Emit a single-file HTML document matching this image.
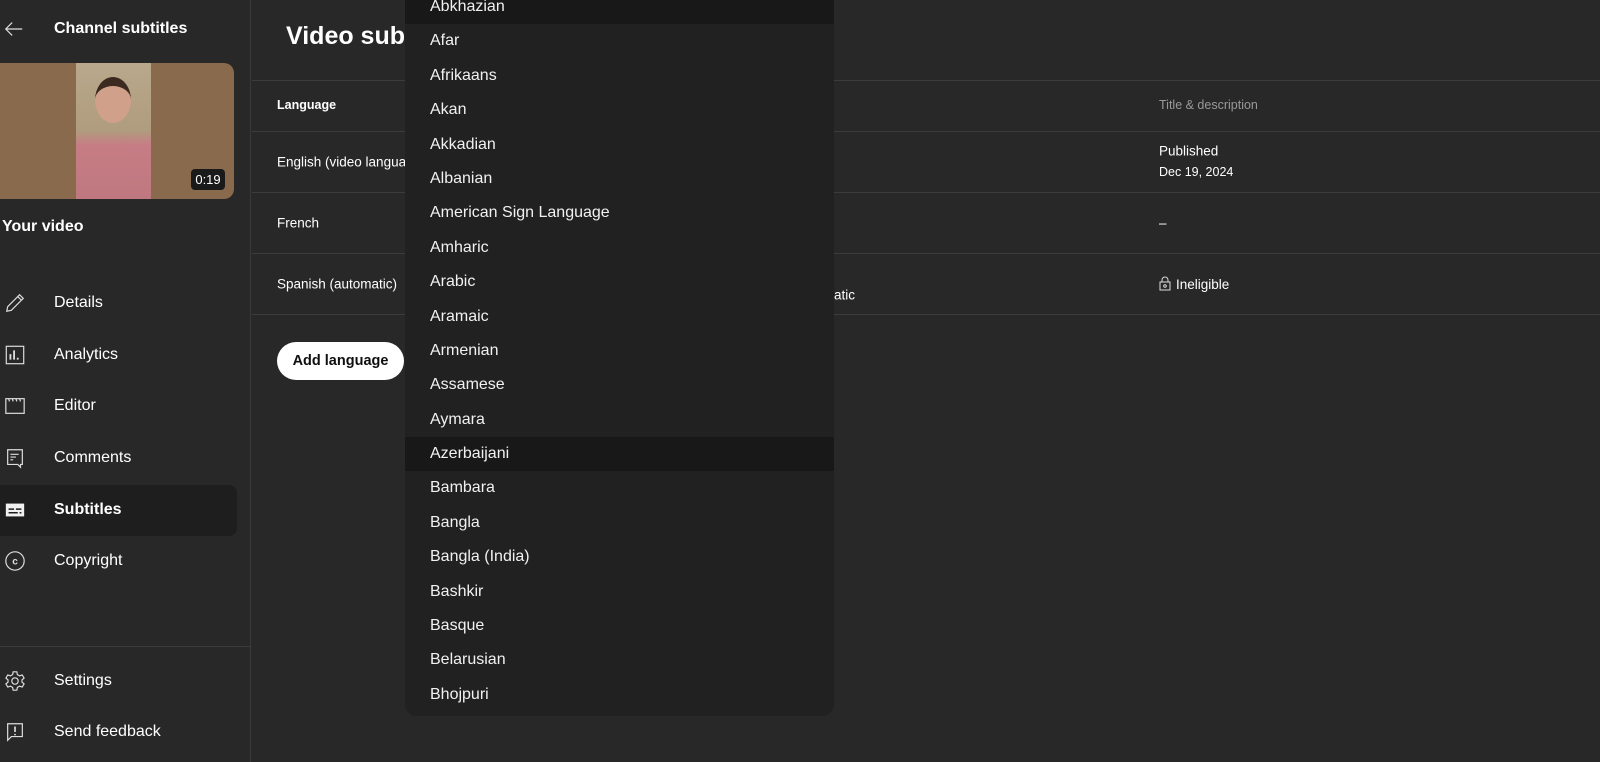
<!DOCTYPE html>
<html><head><meta charset="utf-8"><style>
*{margin:0;padding:0;box-sizing:border-box}
body{width:1600px;height:762px;overflow:hidden;background:#282828;font-family:"Liberation Sans",Arial,sans-serif;color:#fff;position:relative}
.side{position:absolute;left:0;top:0;width:251px;height:762px;border-right:1px solid #3a3a3a;background:#282828}
.abs{position:absolute}
.nav{position:absolute;left:54px;font-size:16px;transform:translateY(-50%)}
.ic{position:absolute;left:4px;width:22px;height:22px;transform:translateY(-50%)}
.line{position:absolute;left:252px;right:0;height:1px;background:#3c3c3c}
.cell{position:absolute;font-size:13.5px;transform:translateY(-50%)}
.dd{position:absolute;left:405px;top:-10px;width:429px;height:726px;background:#212121;border-radius:0 0 12px 12px;overflow:hidden}
.it{height:34.4px;line-height:34.4px;padding-left:25px;font-size:16px;color:#f1f1f1}
.hl{background:#181818}
</style></head><body>
<div class="side">
 <svg class="ic" style="top:29px;left:3px" viewBox="0 0 24 24"><path d="M21 12H3M10 5l-7 7 7 7" stroke="#ddd" stroke-width="1.3" fill="none"/></svg>
 <div class="nav" style="top:29px;font-size:16px;font-weight:bold">Channel subtitles</div>
 <div class="abs" style="left:0;top:63px;width:234px;height:136px;background:#8a6a4c;border-radius:0 10px 10px 0;overflow:hidden">
  <div class="abs" style="left:76px;top:0;width:75px;height:136px;background:linear-gradient(#b9a88c,#b09c7e 50%,#c67d84 60%,#c07880)"></div>
  <div class="abs" style="left:95px;top:14px;width:36px;height:46px;border-radius:50%;background:#d1a08a;border-top:9px solid #3c2a20"></div>
  <div class="abs" style="left:191px;top:106px;width:34px;height:21px;background:#1a1a1a;border-radius:4px;font-size:13px;text-align:center;line-height:21px">0:19</div>
 </div>
 <div class="abs" style="left:2px;top:218px;font-size:16px;font-weight:bold">Your video</div>
 <svg class="ic" style="top:303px" viewBox="0 0 24 24"><path d="M3 21l1-5L17 3l4 4L8 20z M15 5l4 4" stroke="#ddd" stroke-width="1.3" fill="none"/></svg>
 <div class="nav" style="top:303px">Details</div>
 <svg class="ic" style="top:355px" viewBox="0 0 24 24"><rect x="2.5" y="2.5" width="19" height="19" stroke="#ddd" stroke-width="1.3" fill="none"/><path d="M7 17V11M11 17V7M15 17v-2" stroke="#ddd" stroke-width="2"/></svg>
 <div class="nav" style="top:355px">Analytics</div>
 <svg class="ic" style="top:406px" viewBox="0 0 24 24"><rect x="2" y="4" width="20" height="16" stroke="#ddd" stroke-width="1.3" fill="none"/><path d="M5 4l1 3M9 4l1 3M13 4l1 3M17 4l1 3" stroke="#ddd" stroke-width="1.3"/></svg>
 <div class="nav" style="top:406px">Editor</div>
 <svg class="ic" style="top:458px" viewBox="0 0 24 24"><path d="M4 3h16v16h-2v3l-3-3H4z" stroke="#ddd" stroke-width="1.3" fill="none"/><path d="M7 8h9M7 11h6M7 14h3" stroke="#ddd" stroke-width="1.3"/></svg>
 <div class="nav" style="top:458px">Comments</div>
 <div class="abs" style="left:0;top:485px;width:237px;height:51px;background:#1e1e1e;border-radius:0 8px 8px 0"></div>
 <svg class="ic" style="top:510px" viewBox="0 0 24 24"><rect x="2" y="5" width="20" height="14" fill="#f1f1f1"/><path d="M5 11h6M13 11h6M5 15h10M17 15h2" stroke="#1e1e1e" stroke-width="1.6"/></svg>
 <div class="nav" style="top:510px;font-weight:bold">Subtitles</div>
 <svg class="ic" style="top:561px" viewBox="0 0 24 24"><circle cx="12" cy="12" r="10" stroke="#ddd" stroke-width="1.3" fill="none"/><text x="12" y="16" font-size="11" font-weight="bold" fill="#ddd" text-anchor="middle" font-family="Liberation Sans">c</text></svg>
 <div class="nav" style="top:561px">Copyright</div>
 <div class="abs" style="left:0;top:646px;width:251px;height:1px;background:#3c3c3c"></div>
 <svg class="ic" style="top:681px" viewBox="0 0 24 24"><circle cx="12" cy="12" r="3.5" stroke="#ddd" stroke-width="1.3" fill="none"/><path d="M10 2h4l.6 3 2.4 1.4 2.9-1 2 3.4-2.3 2v2.4l2.3 2-2 3.4-2.9-1L14.6 19 14 22h-4l-.6-3L7 17.6l-2.9 1-2-3.4 2.3-2v-2.4l-2.3-2 2-3.4 2.9 1L9.4 5z" stroke="#ddd" stroke-width="1.3" fill="none"/></svg>
 <div class="nav" style="top:681px">Settings</div>
 <svg class="ic" style="top:732px" viewBox="0 0 24 24"><path d="M4 3h16v14H8l-4 4z" stroke="#ddd" stroke-width="1.3" fill="none"/><path d="M12 6v6M12 14v1.5" stroke="#ddd" stroke-width="1.8"/></svg>
 <div class="nav" style="top:732px">Send feedback</div>
</div>

<div class="abs" style="left:286px;top:22px;font-size:25px;font-weight:bold">Video subtitles</div>
<div class="line" style="top:80px"></div>
<div class="cell" style="left:277px;top:105px;font-weight:bold;font-size:12.5px">Language</div>
<div class="cell" style="left:1159px;top:105px;color:#999;font-size:12.5px">Title &amp; description</div>
<div class="line" style="top:131px"></div>
<div class="cell" style="left:277px;top:162px">English (video language)</div>
<div class="cell" style="left:1159px;top:151px">Published</div>
<div class="cell" style="left:1159px;top:172px;font-size:12.5px">Dec 19, 2024</div>
<div class="line" style="top:192px"></div>
<div class="cell" style="left:277px;top:223px">French</div>
<div class="cell" style="left:1159px;top:223px">–</div>
<div class="line" style="top:253px"></div>
<div class="cell" style="left:277px;top:284px">Spanish (automatic)</div>
<div class="cell" style="left:795px;top:295px">Automatic</div>
<div class="cell" style="left:1159px;top:284px"><svg width="12" height="15" viewBox="0 0 12 15" style="vertical-align:-2px;margin-right:5px"><rect x="1" y="6" width="10" height="8" stroke="#ddd" fill="none"/><path d="M3 6V4a3 3 0 016 0v2" stroke="#ddd" fill="none"/><circle cx="6" cy="10" r="1.3" stroke="#ddd" fill="none"/></svg>Ineligible</div>
<div class="line" style="top:314px"></div>
<div class="abs" style="left:277px;top:342px;width:127px;height:38px;background:#fff;border-radius:19px;color:#0f0f0f;font-size:14.5px;font-weight:bold;text-align:center;line-height:38px">Add language</div>

<div class="dd">
<div class="it hl">Abkhazian</div><div class="it">Afar</div><div class="it">Afrikaans</div><div class="it">Akan</div><div class="it">Akkadian</div><div class="it">Albanian</div><div class="it">American Sign Language</div><div class="it">Amharic</div><div class="it">Arabic</div><div class="it">Aramaic</div><div class="it">Armenian</div><div class="it">Assamese</div><div class="it">Aymara</div><div class="it hl">Azerbaijani</div><div class="it">Bambara</div><div class="it">Bangla</div><div class="it">Bangla (India)</div><div class="it">Bashkir</div><div class="it">Basque</div><div class="it">Belarusian</div><div class="it">Bhojpuri</div>
</div>
</body></html>
